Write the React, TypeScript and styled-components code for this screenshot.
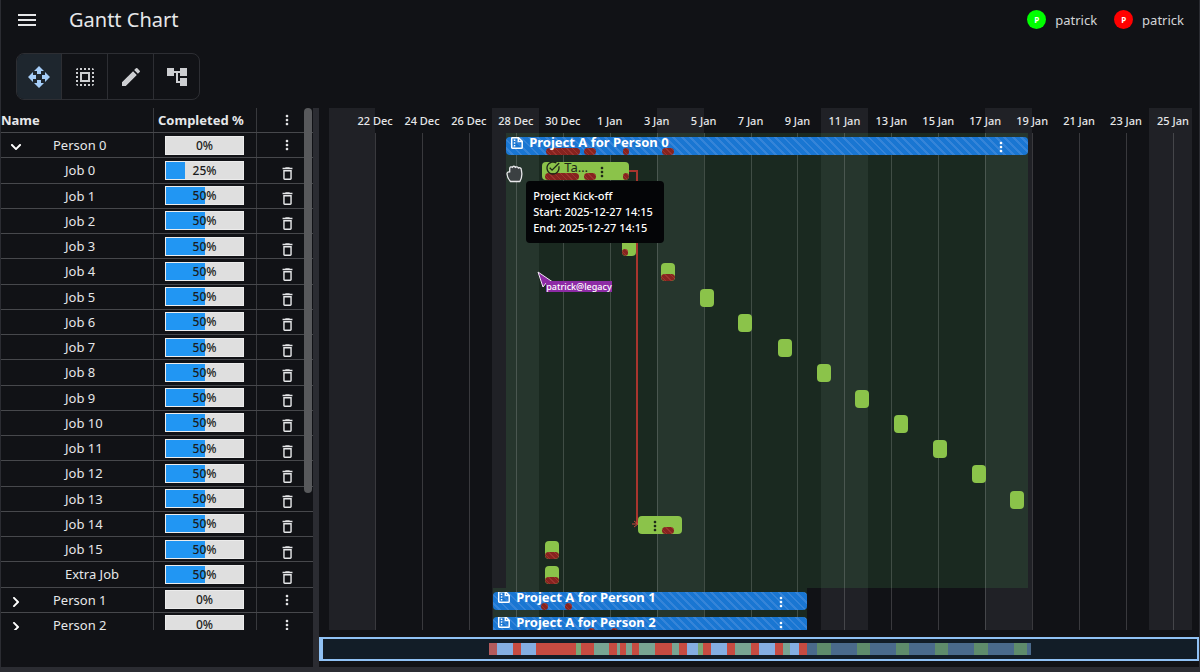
import React from "react";
import styled, { createGlobalStyle, css } from "styled-components";
import {
  MdAccountTree,
  MdDeleteOutline,
  MdEdit,
  MdMenu,
  MdMoreVert,
  MdOpenWith,
  MdSelectAll,
  MdTaskAlt,
} from "react-icons/md";
import { FaChevronDown, FaChevronRight } from "react-icons/fa";

const color = {
  page: "#111216",
  edge: "#2b2c32",
  line: "#47484c",
  text: "#e6e7e9",
  weekend: "#202126",
  group: "rgba(74, 158, 84, 0.17)",
  project: "#1976d2",
  task: "#8bc34a",
  load: "#86231f",
  accent: "#90c2f5",
};

const GlobalStyle = createGlobalStyle`
  *, *::before, *::after { box-sizing: border-box; }
  body {
    margin: 0;
    background: ${color.page};
    color: ${color.text};
    font-family: "Noto Sans", sans-serif;
    font-size: 13px;
    line-height: 16px;
  }
  button {
    display: flex;
    align-items: center;
    justify-content: center;
    padding: 0;
    border: 0;
    background: none;
    color: inherit;
    font: inherit;
    cursor: pointer;
  }
`;

/* ---------- time scale ---------- */

/* The visible range is 862 units wide; one day takes 23.44 units. */
const RANGE = 862;
const DAY = 23.44;
const FIRST_TICK = 46;
const pct = (units: number) => `${(units / RANGE) * 100}%`;
const dayAt = (days: number) => FIRST_TICK + days * DAY;

const ticks = [
  "22 Dec", "24 Dec", "26 Dec", "28 Dec", "30 Dec", "1 Jan", "3 Jan", "5 Jan", "7 Jan",
  "9 Jan", "11 Jan", "13 Jan", "15 Jan", "17 Jan", "19 Jan", "21 Jan", "23 Jan", "25 Jan",
];

const weekends = [
  [0, FIRST_TICK],
  [dayAt(5), dayAt(7)],
  [dayAt(12), dayAt(14)],
  [dayAt(19), dayAt(21)],
  [dayAt(26), dayAt(28)],
  [dayAt(33), RANGE],
];

/* ---------- data ---------- */

type Span = [start: number, width: number];
type Bar = { kind: "project" | "task"; at: Span; label?: string; menu?: number; loads?: Span[] };
type Row = { name: string; level: 0 | 1; open?: boolean; done: number; bar?: Bar };

const small = (start: number, loads?: Span[]): Bar => ({ kind: "task", at: [start, 14], loads });

const jobBars: (Bar | undefined)[] = [
  { kind: "task", at: [213, 87], label: "Ta…", menu: 60, loads: [[3, 34], [42, 12], [81, 6]] },
  undefined,
  undefined,
  small(293, [[0, 6]]),
  small(332, [[0, 14]]),
  ...[371, 409, 448, 487, 525, 564, 603, 642, 680].map((s) => small(s)),
  { kind: "task", at: [309, 44], menu: 17, loads: [[24, 12]] },
  small(216, [[0, 14]]),
];

const rows: Row[] = [
  {
    name: "Person 0", level: 0, open: true, done: 0,
    bar: {
      kind: "project", at: [177, 521], label: "Project A for Person 0", menu: 494,
      loads: [[40, 34], [78, 12], [117, 6], [156, 12]],
    },
  },
  ...jobBars.map((bar, i): Row => ({ name: `Job ${i}`, level: 1, done: i === 0 ? 25 : 50, bar })),
  { name: "Extra Job", level: 1, done: 50, bar: small(216, [[0, 14]]) },
  {
    name: "Person 1", level: 0, done: 0,
    bar: { kind: "project", at: [164, 313], label: "Project A for Person 1", menu: 287, loads: [[48, 7], [72, 7]] },
  },
  {
    name: "Person 2", level: 0, done: 0,
    bar: { kind: "project", at: [164, 313], label: "Project A for Person 2", menu: 287, loads: [[95, 7], [118, 7]] },
  },
];

const groups = [
  { from: 1, to: 19, at: [177, 521] },
  { from: 19, to: 21, at: [164, 313] },
];

const overview: [number, string][] = [
  [8, "#b25a5c"], [16, "b"], [8, "r"], [15, "b"], [40, "r"], [5, "g"], [13, "r"], [15, "t"],
  [8, "r"], [3, "t"], [6, "r"], [6, "t"], [8, "r"], [16, "t"], [17, "r"], [7, "t"], [8, "r"],
  [11, "b"], [5, "g"], [8, "r"], [16, "b"], [8, "r"], [16, "t"], [8, "r"], [16, "b"], [8, "r"],
  [7, "t"], [9, "b"], [8, "r"], [10, "s"], [14, "d"], [26, "s"], [13, "d"], [27, "s"], [13, "d"],
  [26, "s"], [13, "d"], [26, "s"], [14, "d"], [26, "s"], [13, "d"], [4, "s"],
];
const overviewColor: Record<string, string> = {
  b: "#84aee2", r: "#c64b41", t: "#78a593", g: "#79a878", s: "#4a6a8b", d: "#5e8b6b",
};

/* ---------- frame ---------- */

const Page = styled.div`
  display: flex;
  flex-direction: column;
  height: 100vh;
  overflow: hidden;
  border: solid ${color.edge};
  border-width: 0 1px 5px;
`;

const TopBar = styled.header`
  display: flex;
  align-items: center;
  height: 39px;
  padding: 0 15px 0 14px;
`;

const Title = styled.h1`
  margin: 0 auto 0 30px;
  font-size: 20px;
  line-height: 24px;
  font-weight: 400;
`;

const User = styled.div`
  display: flex;
  align-items: center;
  gap: 9px;
  margin-left: 17px;
  color: #d4d5d8;
`;

const Avatar = styled.span<{ $color: string }>`
  display: grid;
  place-items: center;
  width: 19px;
  height: 19px;
  border-radius: 50%;
  background: ${(p) => p.$color};
  color: #fff;
  font-size: 8px;
  font-weight: 700;
`;

const ToolGroup = styled.div`
  display: flex;
  align-self: flex-start;
  margin: 14px 15px 8px;
  border: 1px solid #2d2e33;
  border-radius: 8px;
  overflow: hidden;
`;

const Tool = styled.button<{ $active?: boolean }>`
  width: 46px;
  height: 45px;
  font-size: 24px;
  color: ${(p) => (p.$active ? "#a5cdf8" : "#cdced1")};
  background: ${(p) => (p.$active ? "#1e262e" : "none")};
  &:first-child {
    width: 44px;
  }
  & + & {
    border-left: 1px solid #2d2e33;
  }
`;

const Workspace = styled.main`
  display: flex;
  flex: 1;
  min-height: 0;
`;

/* ---------- table ---------- */

const TablePane = styled.section`
  position: relative;
  width: 312px;
  margin-bottom: 37px;
  overflow: hidden;
`;

const rowsGrid = css`
  display: grid;
  grid-template-rows: 25px repeat(20, 1fr);
  height: 530px;
`;

const Table = styled.table`
  display: block;
`;

const TableBody = styled.tbody`
  ${rowsGrid}
`;

const TableRow = styled.tr`
  display: grid;
  grid-template-columns: 152px 103px 1fr;
  min-height: 0;
  border-bottom: 1px solid ${color.line};
`;

const cell = css`
  display: flex;
  align-items: center;
  min-height: 0;
  padding: 0;
  text-align: left;
`;

const HeadCell = styled.th`
  ${cell}
  font-weight: 700;
  & + & {
    padding-left: 4px;
    border-left: 1px solid #38393d;
  }
`;

const NameCell = styled.td<{ $level: 0 | 1 }>`
  ${cell}
  padding-left: ${(p) => (p.$level ? 64 : 8)}px;
`;

const Expander = styled.button`
  width: 14px;
  height: 16px;
  margin: 4px 30px 0 0;
  font-size: 12px;
  color: #fff;
`;

const Cell = styled.td<{ $center?: boolean }>`
  ${cell}
  justify-content: ${(p) => (p.$center ? "center" : "flex-start")};
  padding-left: ${(p) => (p.$center ? 4 : 11)}px;
  border-left: 1px solid #38393d;
`;

const Progress = styled.div`
  width: 79px;
  height: 19px;
  border: 1px solid #ececec;
  color: #1b1c20;
  font-size: 12px;
  line-height: 17px;
  font-weight: 500;
  text-align: center;
`;

const RowButton = styled.button<{ $low?: boolean }>`
  width: 20px;
  height: 18px;
  margin-top: ${(p) => (p.$low ? 6 : 0)}px;
  font-size: ${(p) => (p.$low ? 17 : 16)}px;
`;

const MenuHead = styled(HeadCell)`
  justify-content: center;
`;

const ScrollThumb = styled.div`
  position: absolute;
  top: 0;
  right: 1px;
  width: 8px;
  height: 385px;
  border-radius: 4px;
  background: #58595c;
`;

const Splitter = styled.div`
  width: 6px;
  background: ${color.edge};
`;

/* ---------- chart ---------- */

const ChartPane = styled.section`
  display: flex;
  flex: 1;
  flex-direction: column;
  min-width: 0;
`;

const Canvas = styled.div`
  position: relative;
  flex: 1;
  min-height: 0;
  margin: 0 7px 0 10px;
  overflow: hidden;
`;

const Layer = styled.div`
  position: absolute;
  inset: 0;
`;

const RowLayer = styled.div`
  position: absolute;
  inset: 0 0 auto;
  ${rowsGrid}
`;

const Weekend = styled.div`
  position: absolute;
  top: 0;
  bottom: 0;
  background: ${color.weekend};
`;

const GridLine = styled.div`
  position: absolute;
  top: 25px;
  bottom: 0;
  width: 1px;
  background: rgba(255, 255, 255, 0.17);
`;

const TickLabel = styled.span`
  position: absolute;
  top: 5px;
  transform: translateX(-50%);
  font-size: 11px;
  font-weight: 500;
  white-space: nowrap;
`;

const Group = styled.div`
  grid-column: 1;
  background: ${color.group};
`;

const ChartRow = styled.div`
  position: relative;
  grid-column: 1;
  min-height: 0;
`;

const BarBox = styled.div<{ $kind: Bar["kind"] }>`
  position: absolute;
  top: 4px;
  height: 18px;
  border-radius: 4px;
  overflow: hidden;
  ${(p) =>
    p.$kind === "project"
      ? css`
          color: #fff;
          font-weight: 700;
          background: repeating-linear-gradient(45deg, ${color.project} 0 4px, #3584d8 4px 6px);
        `
      : css`
          color: #1d2618;
          background: ${color.task};
        `}
`;

const BarLabel = styled.div<{ $kind: Bar["kind"] }>`
  position: relative;
  z-index: 1;
  display: flex;
  align-items: center;
  gap: ${(p) => (p.$kind === "project" ? 4 : 3)}px;
  height: 11px;
  padding-left: 3px;
  font-size: 13px;
  line-height: 11px;
  white-space: nowrap;
  svg {
    flex: none;
    font-size: 16px;
  }
`;

const BarMenu = styled.button`
  position: absolute;
  top: 2px;
  width: 16px;
  height: 16px;
  margin-left: -8px;
  font-size: 16px;
`;

const Load = styled.div`
  position: absolute;
  bottom: 0;
  height: 7px;
  border-radius: 4px;
  background: repeating-linear-gradient(45deg, ${color.load} 0 3px, #9c332e 3px 4px);
`;

const Link = styled.div`
  position: absolute;
  top: 62px;
  height: 354px;
  border: solid #a8352e;
  border-width: 2px 2px 0 0;
`;

const LinkArrow = styled.svg`
  position: absolute;
  right: -3px;
  bottom: -4px;
`;

const Hand = styled.svg`
  position: absolute;
  top: 54px;
`;

const Tooltip = styled.div`
  position: absolute;
  z-index: 2;
  top: 73px;
  padding: 7px 11px 7px 7px;
  border-radius: 4px;
  background: #040507;
  color: #fff;
  font-size: 11px;
  font-weight: 500;
  white-space: nowrap;
`;

const RemoteCursor = styled.div`
  position: absolute;
  top: 163px;
  padding: 10px 0 0 9px;
  svg {
    position: absolute;
    top: 0;
    left: 0;
  }
  span {
    position: relative;
    display: block;
    background: #8d2ba5;
    color: #fff;
    font-size: 9px;
    line-height: 11px;
    font-weight: 500;
  }
`;

const Overview = styled.div`
  display: flex;
  align-items: center;
  flex: none;
  height: 24px;
  margin: 7px 0 6px;
  border: solid ${color.accent};
  border-width: 2px 2px 2px 4px;
  background: #121d27;
`;

const OverviewTrack = styled.div`
  display: flex;
  height: 12px;
  width: 62%;
  margin-left: 19%;
`;

const Segment = styled.i<{ $color: string }>`
  background: ${(p) => p.$color};
`;

/* ---------- components ---------- */

/* A sheet with a folded top-right corner and a column of list dots. */
function ProjectIcon() {
  return (
    <svg width="16" height="16" viewBox="0 0 16 16" fill="none" stroke="currentColor" strokeWidth="1.500">
      <path d="M3.500 2.700h6l3.700 3.700v6c0 .5-.4.900-.9.900H3.500a.8.8 0 0 1-.8-.8v-9c0-.4.400-.8.800-.8z" />
      <path d="M9.300 3v3.600H13" />
      <path d="M4.800 5.200h1.500M4.800 8h1.500M4.800 10.800h1.500" />
    </svg>
  );
}

function GanttBar({ bar }: { bar: Bar }) {
  const [start, width] = bar.at;
  const inner = (n: number) => `${(n / width) * 100}%`;
  return (
    <BarBox $kind={bar.kind} style={{ left: pct(start), width: pct(width) }}>
      {bar.label && (
        <BarLabel $kind={bar.kind}>
          {bar.kind === "project" ? <ProjectIcon /> : <MdTaskAlt />}
          {bar.label}
        </BarLabel>
      )}
      {bar.loads?.map(([s, w]) => <Load key={s} style={{ left: inner(s), width: inner(w) }} />)}
      {bar.menu !== undefined && (
        <BarMenu aria-label="Bar menu" style={{ left: inner(bar.menu) }}>
          <MdMoreVert />
        </BarMenu>
      )}
    </BarBox>
  );
}

function JobTable() {
  return (
    <TablePane>
      <Table>
        <TableBody>
          <TableRow>
            <HeadCell scope="col">Name</HeadCell>
            <HeadCell scope="col">Completed %</HeadCell>
            <MenuHead scope="col">
              <RowButton aria-label="Table menu"><MdMoreVert /></RowButton>
            </MenuHead>
          </TableRow>
          {rows.map((row) => (
            <TableRow key={row.name}>
              <NameCell $level={row.level}>
                {row.level === 0 && (
                  <Expander aria-label={`Toggle ${row.name}`} aria-expanded={!!row.open}>
                    {row.open ? <FaChevronDown /> : <FaChevronRight />}
                  </Expander>
                )}
                {row.name}
              </NameCell>
              <Cell>
                <Progress
                  style={{
                    background: `linear-gradient(90deg, #2196f3 ${row.done}%, #dfdfdf ${row.done}%)`,
                  }}
                >
                  {row.done}%
                </Progress>
              </Cell>
              <Cell $center>
                {row.level === 0 ? (
                  <RowButton aria-label={`${row.name} menu`}><MdMoreVert /></RowButton>
                ) : (
                  <RowButton $low aria-label={`Delete ${row.name}`}><MdDeleteOutline /></RowButton>
                )}
              </Cell>
            </TableRow>
          ))}
        </TableBody>
      </Table>
      <ScrollThumb />
    </TablePane>
  );
}

function Chart() {
  return (
    <ChartPane>
      <Canvas>
        <Layer>
          {weekends.map(([a, b]) => (
            <Weekend key={a} style={{ left: pct(a), width: pct(b - a) }} />
          ))}
        </Layer>
        <RowLayer>
          {groups.map((g) => (
            <Group
              key={g.from}
              style={{
                gridRow: `${g.from + 1} / ${g.to + 1}`,
                marginLeft: pct(g.at[0]),
                width: pct(g.at[1]),
              }}
            />
          ))}
        </RowLayer>
        <Layer>
          {ticks.map((label, i) => (
            <React.Fragment key={label}>
              <GridLine style={{ left: pct(dayAt(i * 2)) }} />
              <TickLabel style={{ left: pct(dayAt(i * 2)) }}>{label}</TickLabel>
            </React.Fragment>
          ))}
        </Layer>
        <RowLayer>
          <ChartRow />
          {rows.map((row) => (
            <ChartRow key={row.name}>{row.bar && <GanttBar bar={row.bar} />}</ChartRow>
          ))}
        </RowLayer>
        <Link style={{ left: pct(300), width: pct(9) }}>
          <LinkArrow width="7" height="8" viewBox="0 0 7 8" fill="none" stroke="#c8443a">
            <path d="M0 4h6M2 1l4 3-4 3" />
          </LinkArrow>
        </Link>
        <Hand style={{ left: pct(177) }} width="18" height="21" viewBox="0 0 18 21">
          <path
            d="M4.500 19.500C2.500 17.500 1.200 15 1 12c-.1-1.700 1-2.500 2.700-2V6.500c0-1.800 2-2.200 2.700-1 .3-1.700 2.500-1.700 3 0 .8-1.200 2.800-.8 3 .7 1-1 2.800-.4 2.900 1.200l.6 4.600c0 2.500-.7 5-2 7.500z"
            fill="#3b4042" stroke="#e9e9ec" strokeWidth="1.300" strokeLinejoin="round"
          />
        </Hand>
        <Tooltip style={{ left: pct(197) }}>
          <div>Project Kick-off</div>
          <div>Start: 2025-12-27 14:15</div>
          <div>End: 2025-12-27 14:15</div>
        </Tooltip>
        <RemoteCursor style={{ left: pct(208) }}>
          <svg width="18" height="18" viewBox="0 0 18 18">
            <path d="M1 1l14 9.500-5.500 1L6 16z" fill="#8d2ba5" stroke="#f1e6f4" strokeLinejoin="round" />
          </svg>
          <span>patrick@legacy</span>
        </RemoteCursor>
      </Canvas>
      <Overview>
        <OverviewTrack>
          {overview.map(([w, c], i) => (
            <Segment key={i} $color={overviewColor[c] ?? c} style={{ flexGrow: w }} />
          ))}
        </OverviewTrack>
      </Overview>
    </ChartPane>
  );
}

export default function App() {
  return (
    <Page>
      <GlobalStyle />
      <TopBar>
        <button aria-label="Menu"><MdMenu size={24} /></button>
        <Title>Gantt Chart</Title>
        <User><Avatar $color="#00ff00">P</Avatar>patrick</User>
        <User><Avatar $color="#ff0000">P</Avatar>patrick</User>
      </TopBar>
      <ToolGroup role="toolbar" aria-label="Chart tools">
        <Tool $active aria-label="Move" aria-pressed="true"><MdOpenWith /></Tool>
        <Tool aria-label="Select"><MdSelectAll /></Tool>
        <Tool aria-label="Edit"><MdEdit /></Tool>
        <Tool aria-label="Link"><MdAccountTree /></Tool>
      </ToolGroup>
      <Workspace>
        <JobTable />
        <Splitter />
        <Chart />
      </Workspace>
    </Page>
  );
}
